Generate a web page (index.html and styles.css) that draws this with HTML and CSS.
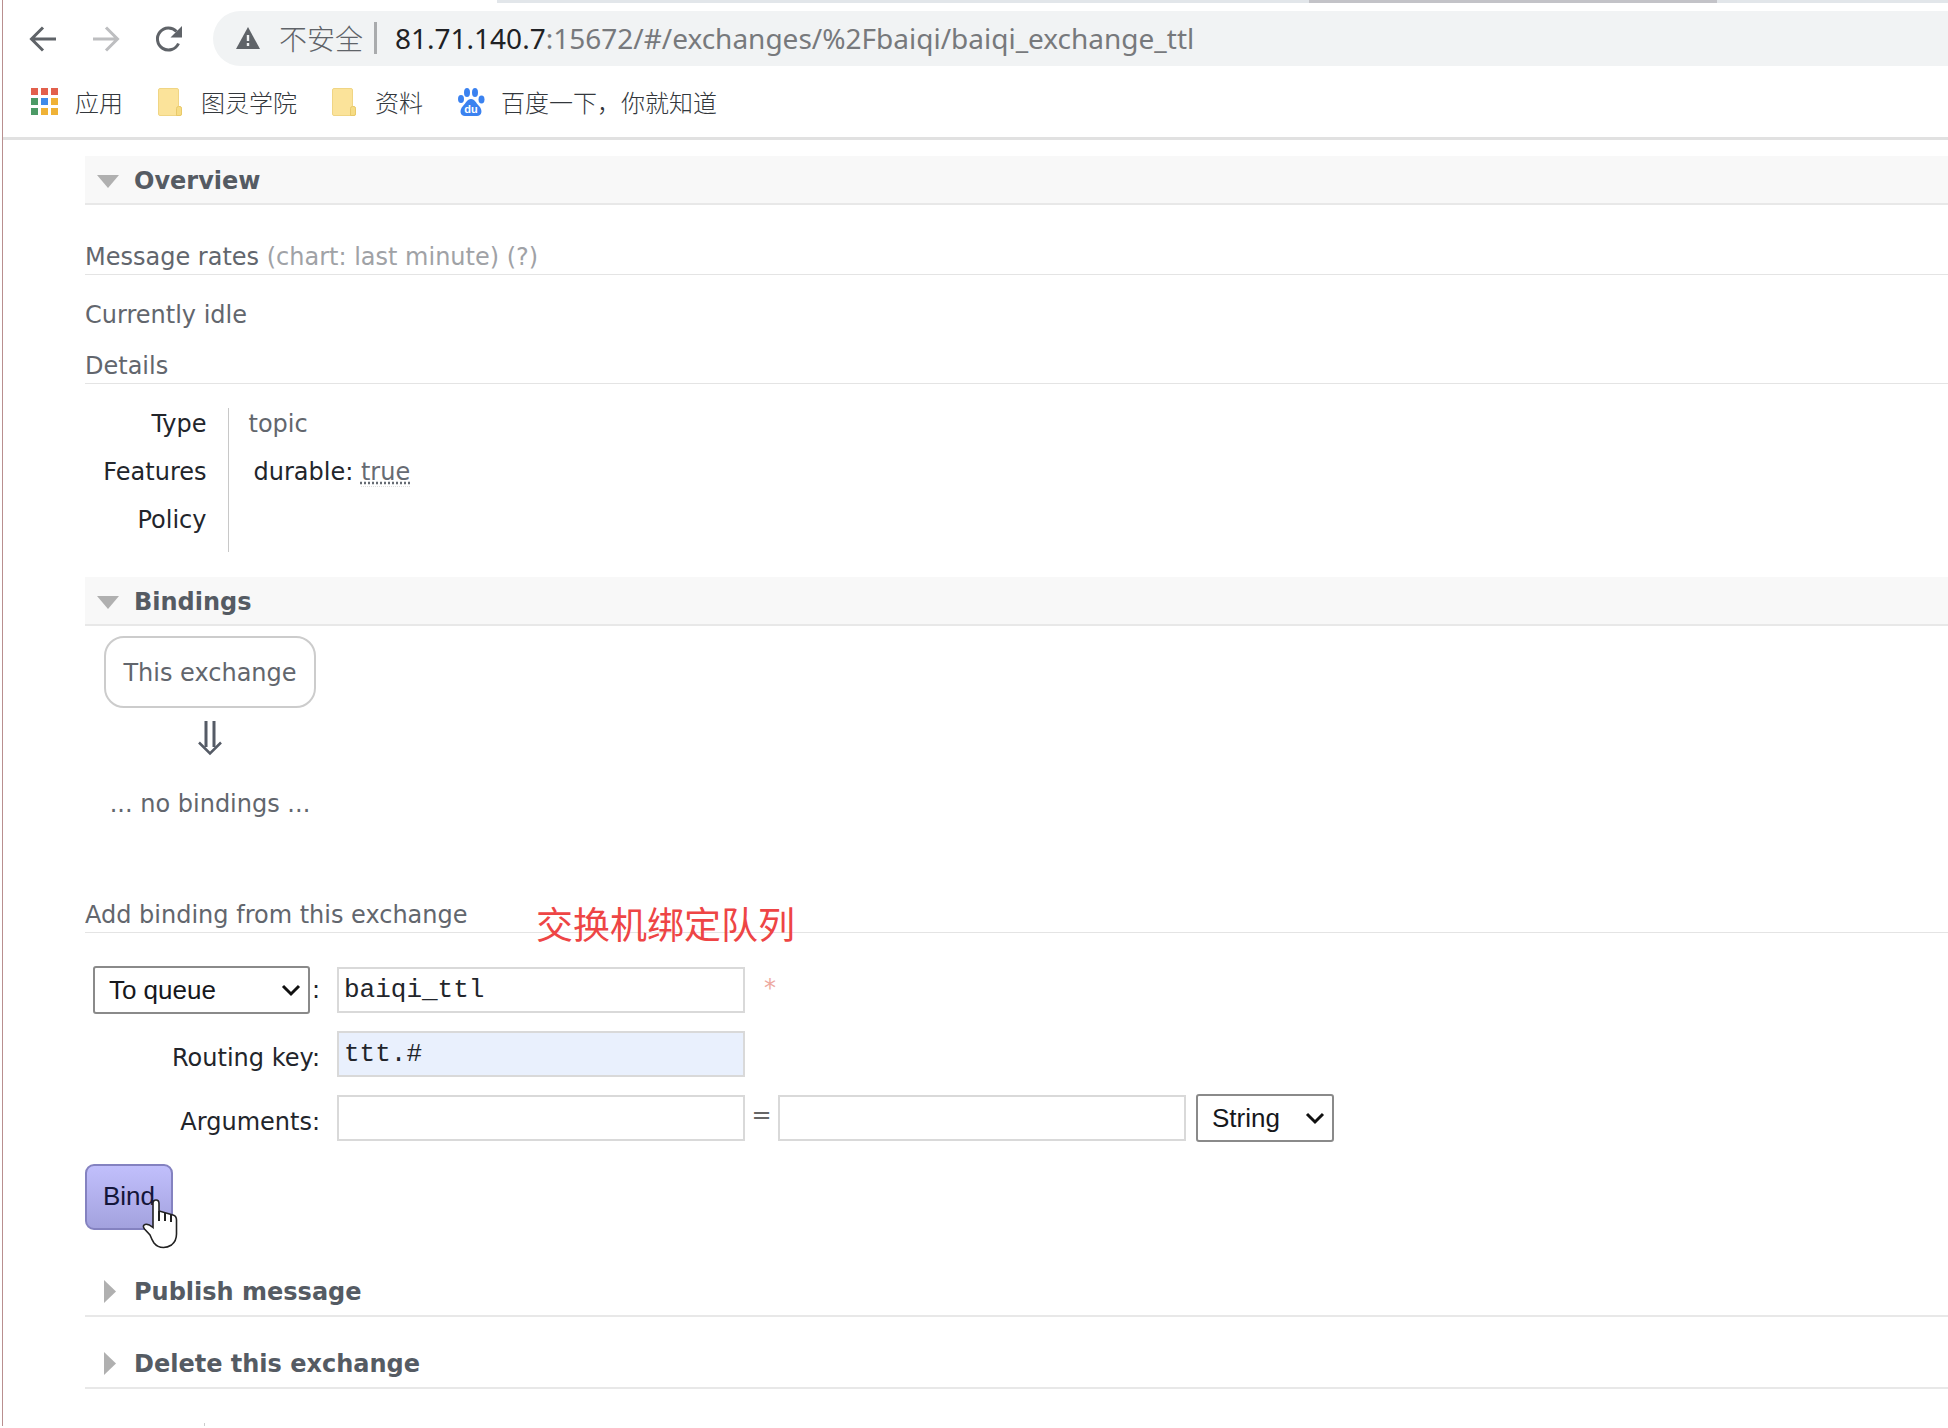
FILE: index.html
```html
<!DOCTYPE html>
<html lang="zh-CN">
<head>
<meta charset="utf-8">
<title>RabbitMQ Management</title>
<link rel="stylesheet" href="styles.css">
</head>
<body>
<div class="window">
  <header class="chrome">
    <div class="tabstrip"><span class="tab-active"></span><span class="tab-rest"><span class="tab-shade"></span></span></div>
    <div class="toolbar">
      <button class="nav-btn" type="button" aria-label="Back"><svg width="28" height="28" viewBox="0 0 28 28" fill="none" stroke="#5f6368" stroke-width="3"><path d="M27 14H3M14 2.500 2.500 14 14 25.500"/></svg></button>
      <button class="nav-btn" type="button" aria-label="Forward"><svg width="28" height="28" viewBox="0 0 28 28" fill="none" stroke="#bdbec0" stroke-width="3"><path d="M1 14h24M14 2.500 25.500 14 14 25.500"/></svg></button>
      <button class="nav-btn" type="button" aria-label="Reload"><svg width="30" height="28" viewBox="0 0 30 28"><path d="M24.500 18.500A11 11 0 1 1 22.500 6.500" fill="none" stroke="#5f6368" stroke-width="3"/><path d="M28 1v11.500H16.500z" fill="#5f6368"/></svg></button>
      <div class="omnibox">
        <svg class="warn" width="26" height="24" viewBox="0 0 26 24"><path d="M13 1 25 23H1z" fill="#5f6368"/><path d="M13 9v6M13 17v3" stroke="#f1f3f4" stroke-width="2.400"/></svg>
        <span class="insecure">不安全</span>
        <span class="divider"></span>
        <label class="host" for="address">81.71.140.7</label><input class="path" id="address" type="text" value=":15672/#/exchanges/%2Fbaiqi/baiqi_exchange_ttl">
      </div>
    </div>
    <nav class="bookmarks">
      <a href="#apps"><svg width="28" height="28" viewBox="0 0 28 28"><g fill="#e2604c"><path d="M0 0h7v7H0zM10 0h7v7h-7zM20 0h7v7h-7z"/></g><g fill="#4c9a66"><path d="M0 10h7v7H0zM0 20h7v7H0z"/></g><path d="M10 10h7v7h-7z" fill="#3f8bea"/><path d="M20 10h7v7h-7zM10 20h7v7h-7zM20 20h7v7h-7z" fill="#efb237"/></svg><span>应用</span></a>
      <a href="#tuling"><svg width="28" height="28" viewBox="0 0 28 28"><path d="M3 .500h17q1.500 0 1.500 1.500v16l3 2v6q0 1.500-1.500 1.500H3Q1.500 27.500 1.500 26V2Q1.500.500 3 .500z" fill="#fbe39a" stroke="#f0d584"/><path d="M19.500 27.500v-7q0-2 2-2H23q1.500 0 1.500 2V26q0 1.500-1.500 1.500z" fill="#f6dc84" stroke="#e9c96a"/></svg><span>图灵学院</span></a>
      <a href="#docs"><svg width="28" height="28" viewBox="0 0 28 28"><path d="M3 .500h17q1.500 0 1.500 1.500v16l3 2v6q0 1.500-1.500 1.500H3Q1.500 27.500 1.500 26V2Q1.500.500 3 .500z" fill="#fbe39a" stroke="#f0d584"/><path d="M19.500 27.500v-7q0-2 2-2H23q1.500 0 1.500 2V26q0 1.500-1.500 1.500z" fill="#f6dc84" stroke="#e9c96a"/></svg><span>资料</span></a>
      <a href="#baidu"><svg width="28" height="28" viewBox="0 0 28 28"><g fill="#3b82f0"><ellipse cx="10" cy="4.500" rx="3" ry="4.500"/><ellipse cx="18" cy="4.500" rx="3" ry="4.500"/><ellipse cx="4" cy="11" rx="3" ry="4"/><ellipse cx="24.500" cy="11.500" rx="3" ry="4"/><path d="M14 11c4 0 5 4 8 7 4 4 3 10-2 10H8c-5 0-6-6-2-10 3-3 4-7 8-7z"/></g><text class="du" x="14" y="25" text-anchor="middle">du</text></svg><span>百度一下，你就知道</span></a>
    </nav>
  </header>

  <main class="page">
    <section class="overview">
      <h2 class="section-head open"><button type="button" aria-expanded="true"><svg class="tri" width="24" height="24" viewBox="0 0 24 24"><path d="M1 6h22L12 19z"/></svg>Overview</button></h2>
      <h3 class="sub rates">Message rates <a href="#chart">(chart: last minute)</a> <a href="#help">(?)</a></h3>
      <p class="idle">Currently idle</p>
      <h3 class="sub details">Details</h3>
      <table class="facts">
        <tr><th scope="row">Type</th><td>topic</td></tr>
        <tr><th scope="row">Features</th><td><span class="feature">durable: <abbr title="true">true</abbr></span></td></tr>
        <tr><th scope="row">Policy</th><td></td></tr>
      </table>
    </section>

    <section class="bindings">
      <h2 class="section-head open"><button type="button" aria-expanded="true"><svg class="tri" width="24" height="24" viewBox="0 0 24 24"><path d="M1 6h22L12 19z"/></svg>Bindings</button></h2>
      <div class="diagram">
        <span class="exchange">This exchange</span>
        <svg class="arrow" width="26" height="36" viewBox="0 0 26 36" fill="none" stroke="#555b66" stroke-width="3"><path d="M9 1v26M17 1v26"/><path d="M2 22.500 13 33.500 24 22.500" stroke-width="2.500"/></svg>
        <p class="none">... no bindings ...</p>
      </div>
      <h3 class="sub add">Add binding from this exchange<span class="note">交换机绑定队列</span></h3>
      <form class="bind-form">
        <div class="cell dest"><select class="target" aria-label="Destination type"><option>To queue</option><option>To exchange</option></select><label for="dest">:</label></div>
        <div class="fields"><input id="dest" type="text" value="baiqi_ttl"><span class="required">*</span></div>
        <label class="cell" for="key">Routing key:</label>
        <div class="fields"><input class="filled" id="key" type="text" value="ttt.#"></div>
        <label class="cell" for="arg">Arguments:</label>
        <div class="fields"><input id="arg" type="text"><span class="equals">=</span><input type="text" aria-label="Argument value"><select class="kind" aria-label="Argument type"><option>String</option><option>Number</option></select></div>
        <div class="submit">
          <button class="bind" type="submit">Bind</button>
          <svg class="cursor" width="36" height="50" viewBox="0 0 36 50"><path d="M11 4.500q0-3.500 3-3.500t3 3.500V12l14 4q3.500 1 3.500 5v14q0 7-5 11-4 2.500-8 2.500-6 0-9.500-4.500Q10 41 8 36L2.500 30Q0 26.500 3 25.500q3-1 8 3z" fill="#fff" stroke="#222" stroke-width="1.600"/><path d="M17 12v10M23 14v8M29 16v7" stroke="#222" stroke-width="2"/></svg>
        </div>
      </form>
    </section>

    <h2 class="section-head publish"><button type="button" aria-expanded="false"><svg class="tri" width="24" height="24" viewBox="0 0 24 24"><path d="M8 0v23l12-11.500z"/></svg>Publish message</button></h2>
    <h2 class="section-head delete"><button type="button" aria-expanded="false"><svg class="tri" width="24" height="24" viewBox="0 0 24 24"><path d="M8 0v23l12-11.500z"/></svg>Delete this exchange</button></h2>
    <div class="footer"><span></span></div>
  </main>
</div>
</body>
</html>
```
FILE: styles.css
```css
* { box-sizing: border-box; }
body {
  margin: 0;
  background: #fff;
  color: #62666d;
  font: 24px/28px "DejaVu Sans", Verdana, sans-serif;
}
h2, h3, p { margin: 0; }
a { color: inherit; text-decoration: none; }
button, input, select { font: inherit; color: inherit; margin: 0; }

.window { margin-left: 2px; border-left: 1px solid #b98f8f; }

/* Browser chrome */
.chrome {
  border-bottom: 3px solid #e1e1e1;
  font-family: "Noto Sans", "Noto Sans CJK SC", sans-serif;
}
.tabstrip { display: flex; height: 3px; }
.tab-active { flex: 0 0 494px; }
.tab-rest { flex: 1; background: #e2e6ea; }
.tab-shade { display: block; width: 408px; height: 3px; margin-left: 812px; background: #c3c3c8; }
.toolbar { display: flex; align-items: center; padding-top: 8px; }
.nav-btn {
  display: flex;
  justify-content: center;
  width: 63px;
  padding: 0;
  border: 0;
  background: none;
}
.nav-btn:first-child { margin-left: 8px; }
.omnibox {
  display: flex;
  align-items: center;
  flex: 1;
  height: 55px;
  margin-left: 13px;
  padding: 0 0 2px 22px;
  border-radius: 28px 0 0 28px;
  background: #f1f3f4;
  color: #77797c;
  font-size: 28px;
}
.insecure { margin-left: 18px; font-family: "Noto Sans CJK SC", sans-serif; font-weight: 300; color: #5f6368; }
.divider { width: 3px; height: 32px; margin: 0 18px 0 11px; background: #a9abad; }
.host { color: #202124; }
.path { flex: 1; min-width: 0; padding: 0; border: 0; background: none; outline: 0; }
.bookmarks {
  display: flex;
  align-items: center;
  gap: 34px;
  height: 71px;
  padding: 0 0 0 28px;
  font-family: "Noto Sans CJK SC", sans-serif;
  font-weight: 300;
  color: #33373c;
}
.bookmarks a { display: flex; align-items: center; gap: 16px; }
.du { font: bold 11px "Liberation Sans", sans-serif; fill: #fff; }

/* Management page */
.page { padding: 16px 0 0 82px; }
.section-head {
  height: 49px;
  border-bottom: 2px solid #e8e8e8;
  color: #555b63;
  font-size: 24px;
  font-weight: bold;
}
.section-head button {
  display: flex;
  align-items: center;
  gap: 14px;
  width: 100%;
  height: 47px;
  padding: 0 0 0 11px;
  border: 0;
  background: none;
  text-align: left;
}
.open { background: #f8f8f8; }
.open button { padding-top: 2px; }
.tri { fill: #b0b0b0; }
.sub {
  padding-bottom: 3px;
  border-bottom: 1px solid #e4e4e4;
  font-size: 24px;
  font-weight: normal;
}
.sub a { color: #a0a2a6; }
.rates { margin-top: 38px; }
.idle { margin-top: 26px; }
.details { margin-top: 23px; }

.facts { margin: 24px 0 25px; border-collapse: collapse; line-height: 32px; }
.facts th, .facts td { height: 48px; padding: 0 0 16px; vertical-align: top; }
.facts th { width: 143px; padding-right: 21px; border-right: 1px solid #c8c8c8; font-weight: normal; text-align: right; color: #22252b; }
.facts td { padding-left: 20px; }
.feature { padding-left: 5px; color: #22252b; }
.feature abbr { color: #666b73; text-decoration: underline dotted; border-bottom: 1px dotted #ddd; }

.diagram {
  display: flex;
  flex-direction: column;
  align-items: center;
  width: 212px;
  margin: 10px 0 0 19px;
}
.exchange {
  width: 212px;
  padding: 21px 0 19px;
  border: 2px solid #ccc;
  border-radius: 20px;
  text-align: center;
}
.arrow { margin-top: 12px; }
.none { margin-top: 34px; white-space: nowrap; }

.add { position: relative; margin-top: 83px; }
.note {
  position: absolute;
  left: 451px;
  top: 0;
  color: #ee4545;
  font: 37px/44px "Noto Sans CJK SC", sans-serif;
  white-space: nowrap;
}

.bind-form {
  display: grid;
  grid-template-columns: 235px 1fr;
  gap: 16px 17px;
  margin-top: 33px;
  color: #22252b;
}
.cell { display: flex; align-items: center; justify-content: flex-end; height: 48px; padding-top: 8px; }
.dest { gap: 2px; padding-top: 0; }
.fields { display: flex; align-items: center; }
.bind-form input {
  width: 408px;
  height: 46px;
  padding: 0 5px 1px;
  border: 2px solid #d9d9d9;
  background: #fff;
  font: 26px "Liberation Mono", monospace;
}
.bind-form .filled { background: #e9f0fd; }
.bind-form select {
  height: 48px;
  padding: 0 14px;
  border: 2px solid #8a8a8a;
  border-radius: 3px;
  appearance: none;
  background: #fff url("data:image/svg+xml,%3Csvg xmlns='http://www.w3.org/2000/svg' width='20' height='14'%3E%3Cpath d='M2 3l8 8 8-8' fill='none' stroke='%23111' stroke-width='3'/%3E%3C/svg%3E") no-repeat right 7px center;
  color: #16181c;
  font: 26px "Liberation Sans", Arial, sans-serif;
}
.target { width: 217px; }
.kind { width: 138px; margin-left: 10px; }
.required { margin-left: 19px; padding-bottom: 4px; color: #eda9a0; }
.equals { width: 33px; padding-bottom: 6px; text-align: center; color: #666; }
.submit { position: relative; grid-column: 1 / -1; justify-self: start; margin-top: 6px; }
.bind {
  display: block;
  width: 88px;
  height: 66px;
  padding: 0 0 2px;
  border: 2px solid #8482c0;
  border-radius: 9px;
  background: linear-gradient(#c1bffc, #a3a2de);
  color: #14163a;
  font: 26px "Liberation Sans", Arial, sans-serif;
}
.cursor { position: absolute; left: 57px; top: 35px; }
.publish { margin-top: 38px; }
.delete { margin-top: 23px; }
.footer { padding: 34px 0 0 119px; }
.footer span { display: block; height: 3px; border-left: 1px solid #ccc; }
```
